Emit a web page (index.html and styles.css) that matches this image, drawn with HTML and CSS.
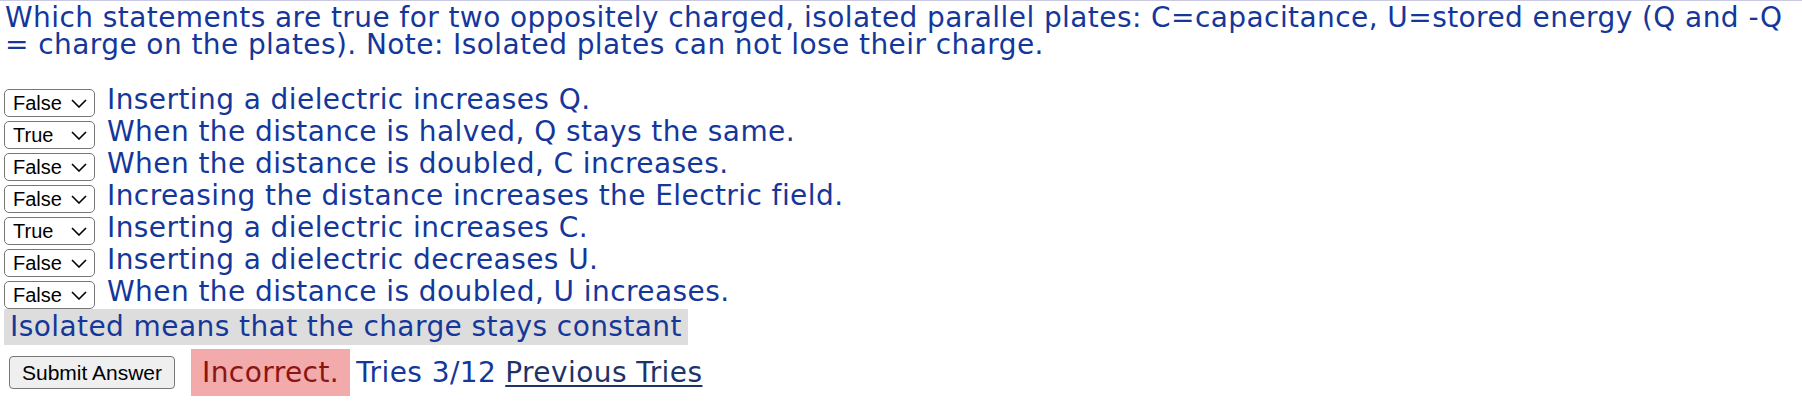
FILE: index.html
```html
<!DOCTYPE html>
<html>
<head>
<meta charset="utf-8">
<link rel="stylesheet" href="styles.css">
</head>
<body>
<div class="page">
  <p class="question">Which statements are true for two oppositely charged, isolated parallel plates: C=capacitance, U=stored energy (Q and -Q = charge on the plates). Note: Isolated plates can not lose their charge.</p>
  <div class="items">
    <div class="row"><select class="tf"><option>False</option><option>True</option></select><span class="stmt">Inserting a dielectric increases Q.</span></div>
    <div class="row"><select class="tf"><option>True</option><option>False</option></select><span class="stmt">When the distance is halved, Q stays the same.</span></div>
    <div class="row"><select class="tf"><option>False</option><option>True</option></select><span class="stmt">When the distance is doubled, C increases.</span></div>
    <div class="row"><select class="tf"><option>False</option><option>True</option></select><span class="stmt">Increasing the distance increases the Electric field.</span></div>
    <div class="row"><select class="tf"><option>True</option><option>False</option></select><span class="stmt">Inserting a dielectric increases C.</span></div>
    <div class="row"><select class="tf"><option>False</option><option>True</option></select><span class="stmt">Inserting a dielectric decreases U.</span></div>
    <div class="row"><select class="tf"><option>False</option><option>True</option></select><span class="stmt">When the distance is doubled, U increases.</span></div>
  </div>
  <div class="hint">Isolated means that the charge stays constant</div>
  <div class="actions">
    <button class="submit">Submit Answer</button>
    <span class="verdict">Incorrect.</span>
    <span class="tries">Tries 3/12</span>
    <a class="prev" href="#">Previous Tries</a>
  </div>
</div>
</body>
</html>
```
FILE: styles.css
```css
html, body {
  margin: 0;
  padding: 0;
  background: #ffffff;
}
body {
  border-top: 1px solid #c9c9e2;
}
.page {
  padding: 0 4px;
  font-family: "DejaVu Sans", Verdana, sans-serif;
  font-size: 28px;
  letter-spacing: 0.42px;
  color: #15379a;
}
.question {
  margin: 0;
  padding-top: 3px;
  padding-left: 1px;
  line-height: 27px;
}
.items {
  margin-top: 31px;
  display: flex;
  flex-direction: column;
  gap: 4px;
}
.row {
  display: flex;
  align-items: center;
  height: 28px;
}
.tf {
  appearance: none;
  -webkit-appearance: none;
  width: 91px;
  height: 28px;
  box-sizing: border-box;
  border: 1px solid #767676;
  border-radius: 5px;
  background-color: #ffffff;
  background-image: url("data:image/svg+xml;utf8,<svg xmlns='http://www.w3.org/2000/svg' width='16' height='9' viewBox='0 0 16 9'><path d='M1 1 L8 8 L15 1' fill='none' stroke='black' stroke-width='1.6'/></svg>");
  background-repeat: no-repeat;
  background-position: right 7px center;
  font-family: "Liberation Sans", Arial, sans-serif;
  font-size: 20px;
  letter-spacing: 0;
  color: #000;
  padding: 0 0 0 8px;
  margin: 0;
  flex: none;
}
.stmt {
  margin-left: 12px;
  line-height: 20px;
  position: relative;
  top: -3px;
}
.hint {
  display: inline-block;
  margin-top: 0;
  background: #dddddd;
  padding: 3px 6px 3px 6px;
  line-height: 30px;
}
.actions {
  margin-top: 4px;
  display: flex;
  align-items: center;
}
.submit {
  margin-left: 5px;
  width: 166px;
  height: 33px;
  box-sizing: border-box;
  border: 1px solid #767676;
  border-radius: 4px;
  background: #efefef;
  font-family: "Liberation Sans", Arial, sans-serif;
  font-size: 21px;
  letter-spacing: 0;
  color: #000;
  padding: 0;
}
.verdict {
  margin-left: 16px;
  background: #f2aaaa;
  color: #8b1414;
  padding: 0 11px 0 11px;
  line-height: 47px;
}
.tries {
  margin-left: 6px;
}
.prev {
  margin-left: 9px;
  color: #1c3468;
  text-decoration: underline;
  text-underline-offset: 3px;
  text-decoration-thickness: 2px;
}
```
